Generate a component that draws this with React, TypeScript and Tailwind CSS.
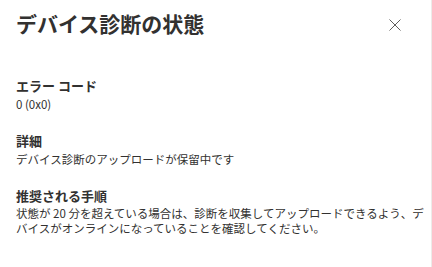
export default function App() {
  return (
    <div
      className="flex h-[267px] w-[432px] flex-col border-r border-[#edebe9] bg-white text-[#323130]"
      style={{ fontFamily: '"Noto Sans CJK JP", "Noto Sans", sans-serif' }}
    >
      <header className="flex items-start justify-between pl-4 pr-[30px] pt-[9px]">
        <h1 className="text-[21px] font-semibold leading-[28px]">デバイス診断の状態</h1>
        <button type="button" aria-label="閉じる" className="mt-[10px] text-[#605e5c]">
          <svg width="12" height="12" viewBox="0 0 12 12" fill="none" stroke="currentColor" strokeWidth="1">
            <path d="M0.5 0.5 L11.5 11.5 M11.5 0.5 L0.5 11.5" />
          </svg>
        </button>
      </header>

      <div className="flex flex-col gap-[19px] pl-4 pr-[6px] pt-[39px]">
        <section>
          <h2 className="text-[13px] font-semibold leading-[20px]">エラー コード</h2>
          <p className="text-[11.5px] leading-[16px]">0 (0x0)</p>
        </section>
        <section>
          <h2 className="text-[13px] font-semibold leading-[20px]">詳細</h2>
          <p className="text-[11.5px] leading-[16px]">デバイス診断のアップロードが保留中です</p>
        </section>
        <section>
          <h2 className="text-[13px] font-semibold leading-[20px]">推奨される手順</h2>
          <p className="text-[11.5px] leading-[15px]">
            状態が 20 分を超えている場合は、診断を収集してアップロードできるよう、デバイスがオンラインになっていることを確認してください。
          </p>
        </section>
      </div>
    </div>
  );
}
